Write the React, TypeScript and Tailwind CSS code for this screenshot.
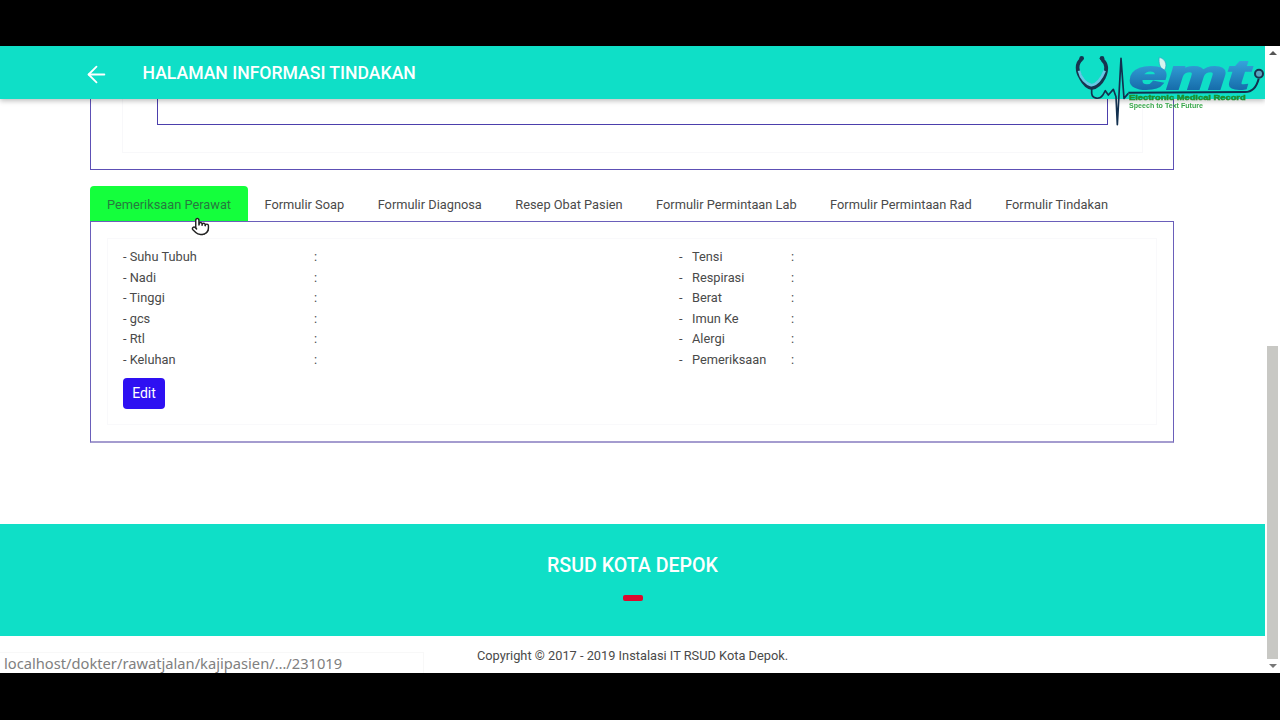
import { ArrowLeft, Pointer } from 'lucide-react';

const tabs = ['Formulir Soap', 'Formulir Diagnosa', 'Resep Obat Pasien', 'Formulir Permintaan Lab', 'Formulir Permintaan Rad', 'Formulir Tindakan'];
const leftRows = ['Suhu Tubuh', 'Nadi', 'Tinggi', 'gcs', 'Rtl', 'Keluhan'];
const rightRows = ['Tensi', 'Respirasi', 'Berat', 'Imun Ke', 'Alergi', 'Pemeriksaan'];

function Logo() {
  return (
    <svg className="absolute left-[1060px] top-[40px] z-20 blur-[0.4px]" width="220" height="100" viewBox="0 0 660 300" fill="none">
      <defs>
        <linearGradient id="emtBlue" x1="0" y1="0" x2="0" y2="1">
          <stop offset="0" stopColor="#3fb4ea" />
          <stop offset="1" stopColor="#0d5c9c" />
        </linearGradient>
      </defs>
      {/* stethoscope */}
      <path d="M65 58 C48 70 50 95 63 115 C73 134 85 142 95 144 C108 142 122 132 132 112 C142 90 140 70 126 58" stroke="#17344f" strokeWidth="11" />
      <path d="M57 92 C62 115 78 132 95 136 C110 132 125 115 134 92" stroke="#66c8e6" strokeWidth="8" />
      <circle cx="65" cy="55" r="7" fill="#17344f" />
      <circle cx="126" cy="55" r="7" fill="#17344f" />
      <path d="M95 140 L95 160 C97 176 118 180 128 166 L136 152 L145 165 L160 148 L168 170 L172 254 L183 55 L192 175 L205 160" stroke="#12304f" strokeWidth="5" strokeLinejoin="round" />
      <path d="M205 158 L555 156 C578 156 590 140 596 116" stroke="#12304f" strokeWidth="6" />
      <circle cx="597" cy="101" r="12" fill="#5aa7c0" stroke="#17344f" strokeWidth="6" />
      {/* leaf */}
      <path d="M298 52 C320 58 322 80 312 92 C300 85 295 68 298 52 Z" fill="#d6f4ee" stroke="#2f9cc4" strokeWidth="2" />
      <text x="208" y="148" fontFamily="'Liberation Sans', sans-serif" fontWeight="700" fontStyle="italic" fontSize="122" fill="url(#emtBlue)" stroke="url(#emtBlue)" strokeWidth="6" textLength="360" lengthAdjust="spacingAndGlyphs">emt</text>
      <text x="207" y="181" fontFamily="'Liberation Sans', sans-serif" fontWeight="700" fontSize="23" fill="#1f8f30" stroke="#1f8f30" strokeWidth="1.4" textLength="350" lengthAdjust="spacingAndGlyphs">Electronic Medical Record</text>
      <text x="207" y="204" fontFamily="'Liberation Sans', sans-serif" fontWeight="700" fontSize="20" fill="#3aa84c" textLength="222" lengthAdjust="spacingAndGlyphs">Speech to Text Future</text>
    </svg>
  );
}

export default function App() {
  return (
    <div className="relative h-[720px] w-[1280px] overflow-hidden bg-black pt-[46px] font-['Roboto',sans-serif] text-[12.8px] text-[#4a4a4a]">
      <Logo />
      <div className="flex h-[627px] bg-white">
        <div className="relative w-[1265px] overflow-hidden">
          {/* Header */}
          <header className="relative z-10 flex h-[53px] items-center bg-[#0fdfc7] pl-[83px] text-white shadow-[0_2px_5px_rgba(0,0,0,0.25)]">
            <ArrowLeft className="mt-[3px]" size={27} strokeWidth={1.6} />
            <h1 className="ml-[32.5px] pt-[2px] text-[17.6px] font-medium leading-[55px]">HALAMAN INFORMASI TINDAKAN</h1>
          </header>

          {/* Top box cut off by the header */}
          <div className="ml-[90px] h-[71px] w-[1084px] border-x border-b border-[#5d50b5] pl-[31px] pr-[30px]">
            <div className="h-[54px] border-x border-b border-[#f8f8fa] px-[34px]">
              <div className="h-[26px] border-x border-b border-[#4c3fac]" />
            </div>
          </div>

          {/* Tabs */}
          <div className="ml-[90px] mt-[16px] flex h-[35px] items-center pt-[3px]">
            <div className="-mt-[3px] flex h-[35px] w-[158px] items-center justify-center rounded-t-[4px] bg-[#14ff3c] pt-[3px] text-[#27793f]">Pemeriksaan Perawat</div>
            {tabs.map(tab => (
              <div key={tab} className="pl-[16.5px] pr-[17px]">{tab}</div>
            ))}
          </div>
          <Pointer className="absolute left-[191px] top-[171px] z-10 fill-white text-[#222]" size={19} strokeWidth={1.8} />

          {/* Tab content */}
          <div className="ml-[90px] w-[1084px] border border-b-2 border-[#6a5eba] border-b-[#a49ccf] px-[16px] py-[16px]">
            <div className="h-[187px] border border-[#f9f9fb] px-[15px] pt-[8px]">
              <div className="flex leading-[20.6px]">
                <div className="w-[556px]">
                  {leftRows.map(row => (
                    <div key={row} className="flex">
                      <span className="w-[191px]">- {row}</span>
                      <span>:</span>
                    </div>
                  ))}
                </div>
                <div>
                  {rightRows.map(row => (
                    <div key={row} className="flex">
                      <span className="w-[13px]">-</span>
                      <span className="w-[99px]">{row}</span>
                      <span>:</span>
                    </div>
                  ))}
                </div>
              </div>
              <button className="mt-[7.6px] h-[31px] w-[42px] rounded-[4px] bg-[#2e10f2] text-[14px] text-white">Edit</button>
            </div>
          </div>

          {/* Footer */}
          <div className="mt-[81px] h-[112px] bg-[#0fdfc7] pt-[28px] text-center">
            <p className="text-[19.6px] font-medium leading-[28px] text-white">RSUD KOTA DEPOK</p>
            <div className="mx-auto mt-[15px] h-[6px] w-[20px] rounded-[2px] bg-[#dc0a2e]" />
          </div>
          <p className="pt-[10.5px] text-center leading-[18px]">Copyright © 2017 - 2019 Instalasi IT RSUD Kota Depok.</p>

          {/* Browser status bubble */}
          <div className="absolute bottom-0 left-0 z-10 h-[21px] w-[424px] border-r border-t border-[#f8f8f8] bg-white pl-[4px] font-['Noto_Sans',sans-serif] text-[14.7px] leading-[20px] text-[#808080]">
            localhost/dokter/rawatjalan/kajipasien/…/231019
          </div>
        </div>

        {/* Scrollbar */}
        <div className="flex w-[15px] flex-col items-center justify-between bg-white py-[5px]">
          <div className="h-0 w-0 border-x-[4px] border-b-[4px] border-x-transparent border-b-[#555]" />
          <div className="mt-[286px] h-[313px] w-[11px] bg-[#c8c8c4]" />
          <div className="h-0 w-0 border-x-[4px] border-t-[4px] border-x-transparent border-t-[#777]" />
        </div>
      </div>
    </div>
  );
}
